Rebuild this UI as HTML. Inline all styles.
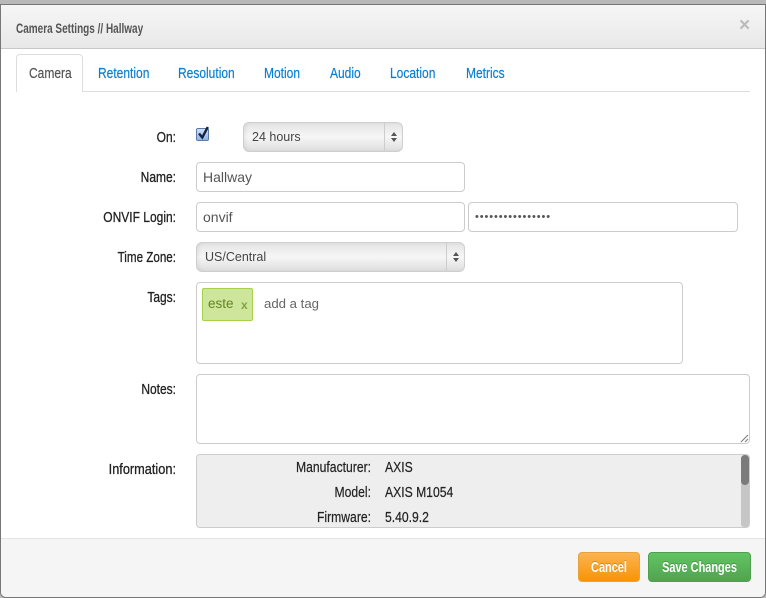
<!DOCTYPE html>
<html><head><meta charset="utf-8"><style>
html,body{margin:0;padding:0}
body{width:766px;height:598px;position:relative;overflow:hidden;background:#b9b9b9;font-family:"Liberation Sans",sans-serif}
div,span{position:absolute;box-sizing:border-box}
.c{white-space:nowrap;transform:scaleX(.8);font-size:15px;line-height:16px;-webkit-text-stroke:.2px}
.l{white-space:nowrap;transform:scaleX(.8);transform-origin:100% 50%;font-size:15px;line-height:16px;color:#222;text-align:right;width:160px;left:16px;-webkit-text-stroke:.3px}
.tab{color:#0b7fd0;transform-origin:0 50%;top:66px}
.i{background:#fff;border:1px solid #ccc;border-radius:4px}
.v{white-space:nowrap;font-size:14px;line-height:16px;color:#555}
.sel{border:1px solid #cfcfcf;border-radius:6px;background:linear-gradient(#e4e4e4,#f6f6f6 50%,#dedede);box-shadow:inset 2px 0 3px rgba(0,0,0,.06)}
.sep{top:0;bottom:0;width:1px;background:#cdcdcd}
.up{width:0;height:0;border-left:3px solid transparent;border-right:3px solid transparent;border-bottom:4px solid #555}
.dn{width:0;height:0;border-left:3px solid transparent;border-right:3px solid transparent;border-top:4px solid #555}
.info{white-space:nowrap;transform:scaleX(.81);font-size:15px;line-height:16px;color:#222;-webkit-text-stroke:.2px}
.il{transform-origin:100% 50%;text-align:right;width:130px;left:241px}
.iv{transform-origin:0 50%;left:385px}
.btn{left:0;text-align:center;top:560px;color:#fff;font-weight:bold;font-size:15px;transform:scaleX(.73);-webkit-text-stroke:0;text-shadow:0 -1px 0 rgba(0,0,0,.2)}
</style></head><body>
<div style="left:0;top:4px;width:766px;height:594px;background:#fff;border:1px solid #777;border-radius:0 0 6px 6px"></div>
<div style="left:1px;top:5px;width:764px;height:44px;background:linear-gradient(#f6f6f6,#e8e8e8);border-bottom:1px solid #c8c8c8"></div>
<div class="c" style="left:16px;top:21px;font-weight:bold;font-size:13.5px;color:#555;transform:scaleX(.74);transform-origin:0 50%;-webkit-text-stroke:0">Camera Settings // Hallway</div>
<div style="left:739px;top:18px;font-size:19px;line-height:16px;font-weight:bold;color:#bbb">×</div>

<div style="left:16px;top:91px;width:734px;height:1px;background:#ddd"></div>
<div style="left:16px;top:54px;width:67px;height:38px;background:#fff;border:1px solid #ddd;border-bottom:0;border-radius:4px 4px 0 0"></div>
<div class="c tab" style="left:29px;color:#555">Camera</div>
<div class="c tab" style="left:98px">Retention</div>
<div class="c tab" style="left:178px">Resolution</div>
<div class="c tab" style="left:264px">Motion</div>
<div class="c tab" style="left:330px">Audio</div>
<div class="c tab" style="left:390px">Location</div>
<div class="c tab" style="left:466px">Metrics</div>

<div class="l" style="top:130px">On:</div>
<div style="left:196px;top:128px;width:13px;height:13px;background:linear-gradient(#cfe0f7,#8fb3ea);border:1px solid #5d7ba6;border-radius:2px"></div>
<svg style="position:absolute;left:196px;top:126px" width="14" height="15" viewBox="0 0 14 15"><path d="M3 7.5L6.3 11.5L11.8 1" fill="none" stroke="#14233c" stroke-width="2.4"/></svg>
<div class="sel" style="left:243px;top:122px;width:160px;height:30px"><div class="sep" style="left:140px"></div><div class="up" style="left:147px;top:9px"></div><div class="dn" style="left:147px;top:15px"></div></div>
<div class="v" style="left:252px;top:129px;font-size:12.5px;color:#444">24 hours</div>

<div class="l" style="top:170px">Name:</div>
<div class="i" style="left:196px;top:162px;width:269px;height:30px"></div>
<div class="v" style="left:203px;top:169px">Hallway</div>

<div class="l" style="top:210px">ONVIF Login:</div>
<div class="i" style="left:196px;top:202px;width:269px;height:30px"></div>
<div class="v" style="left:203px;top:209px">onvif</div>
<div class="i" style="left:468px;top:202px;width:270px;height:30px"></div>
<div class="v" style="left:475px;top:209px;font-size:11px;letter-spacing:.9px;color:#555">••••••••••••••••</div>

<div class="l" style="top:250px;transform:scaleX(.775)">Time Zone:</div>
<div class="sel" style="left:196px;top:242px;width:269px;height:30px"><div class="sep" style="left:249px"></div><div class="up" style="left:256px;top:9px"></div><div class="dn" style="left:256px;top:15px"></div></div>
<div class="v" style="left:205px;top:249px;font-size:12.5px;color:#444">US/Central</div>

<div class="l" style="top:290px">Tags:</div>
<div class="i" style="left:196px;top:282px;width:487px;height:82px"></div>
<div style="left:202px;top:288px;width:51px;height:33px;background:#cde69c;border:1px solid #a5d24a;border-radius:2px"></div>
<div class="v" style="left:208px;top:296px;font-size:13.5px;color:#638421">este</div>
<div class="v" style="left:241px;top:297px;font-size:12px;font-weight:bold;color:#7fa83a">x</div>
<div class="v" style="left:264px;top:296px;font-size:13.2px;color:#666">add a tag</div>

<div class="l" style="top:382px">Notes:</div>
<div class="i" style="left:196px;top:374px;width:554px;height:70px"></div>
<svg style="position:absolute;left:740px;top:434px" width="9" height="9" viewBox="0 0 9 9"><path d="M1 8L8 1M5 8L8 5" stroke="#777" stroke-width="1" fill="none"/></svg>

<div class="l" style="top:462px;transform:scaleX(.85)">Information:</div>
<div style="left:196px;top:454px;width:554px;height:74px;background:#eee;border:1px solid #ccc;border-radius:4px"></div>
<div style="left:741px;top:455px;width:8px;height:72px;background:#c6c6c6;border-radius:3px"></div>
<div style="left:741px;top:455px;width:8px;height:30px;background:#7b7b7b;border-radius:4px"></div>
<div class="info il" style="top:460px">Manufacturer:</div><div class="info iv" style="top:460px">AXIS</div>
<div class="info il" style="top:485px">Model:</div><div class="info iv" style="top:485px">AXIS M1054</div>
<div class="info il" style="top:510px">Firmware:</div><div class="info iv" style="top:510px">5.40.9.2</div>

<div style="left:1px;top:538px;width:764px;height:59px;background:#f5f5f5;border-top:1px solid #e5e5e5;border-radius:0 0 5px 5px"></div>
<div style="left:578px;top:552px;width:62px;height:30px;background:linear-gradient(#fbb450,#f89406);border:1px solid #e8a33d;border-radius:4px"></div>
<div class="c btn" style="left:578px;width:62px">Cancel</div>
<div style="left:648px;top:552px;width:103px;height:30px;background:linear-gradient(#62c462,#51a351);border:1px solid #4f9f4f;border-radius:4px"></div>
<div class="c btn" style="left:648px;width:103px">Save Changes</div>
</body></html>
